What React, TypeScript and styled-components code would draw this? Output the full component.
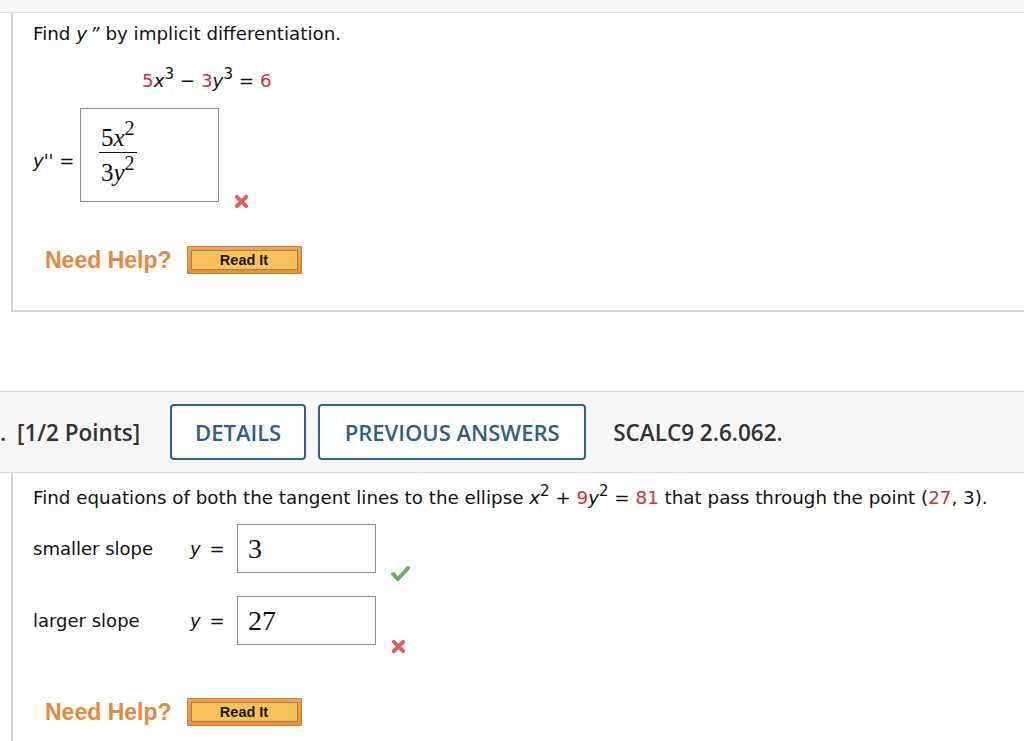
import React from 'react';
import styled, { createGlobalStyle } from 'styled-components';

const GlobalStyle = createGlobalStyle`
  html, body {
    margin: 0;
    padding: 0;
    background: #ffffff;
  }
  body {
    font-family: "DejaVu Sans", Verdana, sans-serif;
    color: #111;
    overflow: hidden;
  }
`;

const Page = styled.div`
  width: 1024px;
  height: 741px;
  overflow: hidden;
`;

const TopStrip = styled.div`
  height: 12px;
  background: #f7f7f7;
  border-bottom: 1px solid #dcdcdc;
`;

const Panel = styled.div<{ $bottom?: boolean }>`
  margin-left: 11px;
  border-left: 2px solid #d6d6d6;
  border-bottom: ${(p) => (p.$bottom ? '2px solid #d6d6d6' : 'none')};
  padding: 0 0 0 20px;
`;

const Prompt = styled.p<{ $top: number }>`
  margin: 0;
  padding-top: ${(p) => p.$top}px;
  font-size: 18.3px;
  line-height: 22px;
  color: #111;
  white-space: nowrap;
`;

const Var = styled.i`
  font-style: italic;
`;

const Prime = styled.i`
  font-style: italic;
  margin-left: 3px;
`;

const Red = styled.span`
  color: #d2302c;
`;

const Sup = styled.sup`
  font-size: 15px;
  vertical-align: 8px;
  line-height: 0;
`;

const Equation = styled.div`
  margin: 25px 0 0 109px;
  font-size: 18.3px;
  line-height: 22px;
`;

const AnswerRow = styled.div`
  display: flex;
  align-items: center;
  margin-top: 16px;
`;

const EqLabel = styled.span`
  width: 47px;
  font-size: 18px;
  padding-top: 10px;
`;

const MathBox = styled.div<{ $w: number; $h: number }>`
  width: ${(p) => p.$w}px;
  height: ${(p) => p.$h}px;
  box-sizing: border-box;
  border: 1px solid #8e8e8e;
  background: #fff;
  display: flex;
  align-items: center;
  padding-left: 18px;
  font-family: "Liberation Serif", "DejaVu Serif", serif;
`;

const Fraction = styled.div`
  display: inline-flex;
  flex-direction: column;
  align-items: center;
  font-size: 25px;
  line-height: 26px;
`;

const FracPart = styled.span`
  padding: 0 2px;
`;

const FracLine = styled.span`
  display: block;
  align-self: stretch;
  height: 1px;
  background: #111;
  margin: 1px 0 7px;
`;

const MathSup = styled.span`
  font-size: 20px;
  vertical-align: 11px;
  line-height: 0;
`;

const MathVar = styled.span`
  font-style: italic;
`;

const Mark = styled.span<{ $gap: number; $drop: number }>`
  align-self: flex-end;
  margin-left: ${(p) => p.$gap}px;
  margin-bottom: -${(p) => p.$drop}px;
  display: inline-flex;
`;

const HelpRow = styled.div<{ $top: number; $bottom: number }>`
  display: flex;
  align-items: center;
  height: 28px;
  margin-top: ${(p) => p.$top}px;
  padding-left: 12px;
  padding-bottom: ${(p) => p.$bottom}px;
`;

const NeedHelp = styled.span`
  font-family: "Liberation Sans", Arial, sans-serif;
  font-weight: bold;
  font-size: 23px;
  color: #e8893a;
  margin-right: 15px;
`;

const ReadIt = styled.button`
  width: 115px;
  height: 28px;
  box-sizing: border-box;
  padding: 3px;
  border: 1px solid #c9843c;
  background: linear-gradient(#f0a54e, #e8913c);
  display: flex;
  cursor: pointer;
`;

const ReadItInner = styled.span`
  flex: 1;
  border: 1px solid #b27a3b;
  background: #f5c25c;
  font-family: "Liberation Sans", Arial, sans-serif;
  font-weight: bold;
  font-size: 14.5px;
  color: #1a1a1a;
  display: flex;
  align-items: center;
  justify-content: center;
`;

const Gap = styled.div`
  height: 79px;
`;

const Header = styled.div`
  display: flex;
  align-items: center;
  height: 82px;
  box-sizing: border-box;
  background: #f7f7f7;
  border-top: 1px solid #dedede;
  border-bottom: 1px solid #dedede;
  font-family: "Open Sans", sans-serif;
  font-size: 22.5px;
  font-weight: 600;
  color: #333;
`;

const QNum = styled.span`
  width: 17px;
`;

const Points = styled.span`
  margin-right: 30px;
`;

const TabButton = styled.button<{ $w: number }>`
  width: ${(p) => p.$w}px;
  height: 56px;
  box-sizing: border-box;
  border: 2px solid #2d6496;
  border-radius: 4px;
  background: #fff;
  color: #2b5f90;
  font-family: "Open Sans", sans-serif;
  font-size: 22px;
  font-weight: 600;
  margin-right: 12px;
  padding: 0;
  cursor: pointer;
`;

const Code = styled.span`
  margin-left: 15px;
`;

const SlopeRow = styled.div<{ $top: number }>`
  display: flex;
  align-items: center;
  margin-top: ${(p) => p.$top}px;
`;

const SlopeLabel = styled.span`
  width: 157px;
  font-size: 18px;
`;

const YEq = styled.span`
  width: 47px;
  font-size: 18px;
  word-spacing: 3px;
`;

const Value = styled.span`
  font-size: 28px;
  margin-left: -8px;
`;

const Cross = ({ size = 15 }: { size?: number }) => (
  <svg width={size} height={size} viewBox="0 0 16 16">
    <path d="M3 3 L13 13 M13 3 L3 13" stroke="#e35b5b" strokeWidth="4" strokeLinecap="round" fill="none" />
  </svg>
);

const Check = () => (
  <svg width="21" height="17" viewBox="0 0 21 17">
    <path d="M3 9 L8 14 L18 3" stroke="#5fb35a" strokeWidth="4" strokeLinecap="round" strokeLinejoin="round" fill="none" />
  </svg>
);

const Help = ({ top, bottom }: { top: number; bottom: number }) => (
  <HelpRow $top={top} $bottom={bottom}>
    <NeedHelp>Need Help?</NeedHelp>
    <ReadIt>
      <ReadItInner>Read It</ReadItInner>
    </ReadIt>
  </HelpRow>
);

export default function App() {
  return (
    <Page>
      <GlobalStyle />
      <TopStrip />
      <Panel $bottom>
        <Prompt $top={10}>
          Find <Var>y</Var>
          <Prime>”</Prime> by implicit differentiation.
        </Prompt>
        <Equation>
          <Red>5</Red>
          <Var>x</Var>
          <Sup>3</Sup> − <Red>3</Red>
          <Var>y</Var>
          <Sup>3</Sup> = <Red>6</Red>
        </Equation>
        <AnswerRow>
          <EqLabel>
            <Var>y''</Var> =
          </EqLabel>
          <MathBox $w={139} $h={94}>
            <Fraction>
              <FracPart>
                5<MathVar>x</MathVar>
                <MathSup>2</MathSup>
              </FracPart>
              <FracLine />
              <FracPart>
                3<MathVar>y</MathVar>
                <MathSup>2</MathSup>
              </FracPart>
            </Fraction>
          </MathBox>
          <Mark $gap={15} $drop={7}>
            <Cross />
          </Mark>
        </AnswerRow>
        <Help top={44} bottom={36} />
      </Panel>
      <Gap />
      <Header>
        <QNum>.</QNum>
        <Points>[1/2 Points]</Points>
        <TabButton $w={136}>DETAILS</TabButton>
        <TabButton $w={268}>PREVIOUS ANSWERS</TabButton>
        <Code>SCALC9 2.6.062.</Code>
      </Header>
      <Panel>
        <Prompt $top={14}>
          Find equations of both the tangent lines to the ellipse <Var>x</Var>
          <Sup>2</Sup> + <Red>9</Red>
          <Var>y</Var>
          <Sup>2</Sup> = <Red>81</Red> that pass through the point (<Red>27</Red>, 3).
        </Prompt>
        <SlopeRow $top={15}>
          <SlopeLabel>smaller slope</SlopeLabel>
          <YEq>
            <Var>y</Var> =
          </YEq>
          <MathBox $w={139} $h={49}>
            <Value>3</Value>
          </MathBox>
          <Mark $gap={14} $drop={9}>
            <Check />
          </Mark>
        </SlopeRow>
        <SlopeRow $top={23}>
          <SlopeLabel>larger slope</SlopeLabel>
          <YEq>
            <Var>y</Var> =
          </YEq>
          <MathBox $w={139} $h={49}>
            <Value>27</Value>
          </MathBox>
          <Mark $gap={15} $drop={9}>
            <Cross />
          </Mark>
        </SlopeRow>
        <Help top={53} bottom={20} />
      </Panel>
    </Page>
  );
}
